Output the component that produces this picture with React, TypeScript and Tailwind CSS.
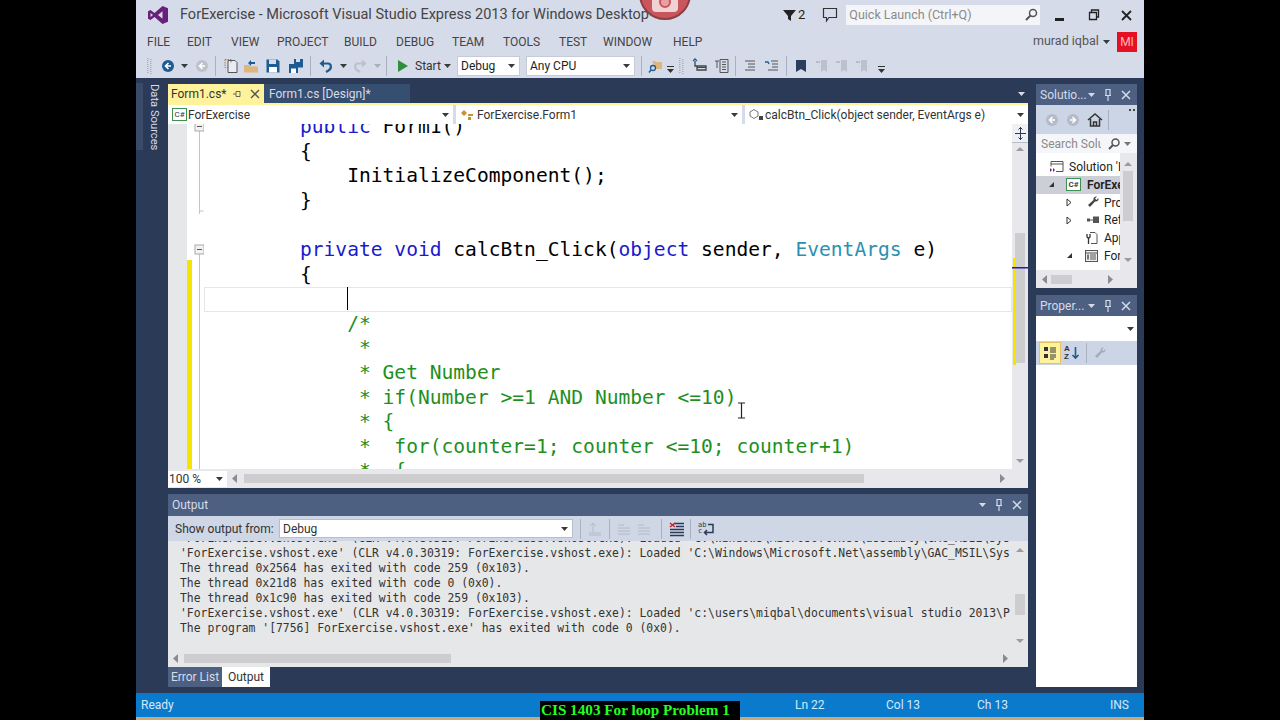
const Caret = ({ className = "", color = "#3a3a3a" }: { className?: string; color?: string }) => (
  <svg width="7" height="4" viewBox="0 0 7 4" className={"shrink-0 " + className}>
    <path d="M0 0h7L3.5 4z" fill={color} />
  </svg>
);

const Grip = ({ className = "" }: { className?: string }) => (
  <svg width="6" height="16" viewBox="0 0 6 16" className={"shrink-0 " + className}>
    {[0, 2, 4, 6, 8, 10, 12, 14].map((y) => (
      <g key={y} fill="#a9aebb">
        <rect x="0" y={y} width="1.5" height="1" />
        <rect x="3" y={y + 1} width="1.5" height="1" />
      </g>
    ))}
  </svg>
);

const Sep = ({ className = "", h = "h-[20px]" }: { className?: string; h?: string }) => (
  <div className={"w-px shrink-0 bg-[#a9b0c0] " + h + " " + className} />
);

const Overflow = ({ className = "" }: { className?: string }) => (
  <svg width="7" height="8" viewBox="0 0 7 8" className={"shrink-0 " + className}>
    <path d="M0 0h7v1H0zM0 3h7L3.5 7z" fill="#333" />
  </svg>
);

const Ico = ({ children, className = "", w = 16, h = 16 }: { children: React.ReactNode; className?: string; w?: number; h?: number }) => (
  <svg width={w} height={h} viewBox={`0 0 ${w} ${h}`} className={"shrink-0 " + className}>
    {children}
  </svg>
);

const NavCircle = ({ dir, color, className = "" }: { dir: "left" | "right"; color: string; className?: string }) => (
  <Ico w={14} h={14} className={className}>
    <circle cx="7" cy="7" r="6" fill={color} />
    <path d={dir === "left" ? "M7.5 4 4.5 7l3 3M5 7h5" : "M6.5 4l3 3-3 3M9 7H4"} stroke="#fff" strokeWidth="1.6" fill="none" />
  </Ico>
);

const PanelHeader = ({ title, wide }: { title: string; wide?: boolean }) => (
  <div className={"flex shrink-0 items-center bg-[#4d6082] text-[#d6dbe9] " + (wide ? "h-[22px] pl-[4px] pr-[5px] text-[12px]" : "h-[21px] pl-[4px] pr-[5px] text-[12px]")}>
    <span className="min-w-0 flex-1 truncate">{title}</span>
    <Caret color="#d6dbe9" />
    <Ico w={12} h={14} className="ml-[7px]">
      <path d="M4 1.5h4v6H4zM3 7.5h6M6 8v5" stroke="#d6dbe9" strokeWidth="1.2" fill="none" />
    </Ico>
    <Ico w={12} h={12} className="ml-[6px]">
      <path d="M2 2l8 8M10 2l-8 8" stroke="#d6dbe9" strokeWidth="1.5" />
    </Ico>
  </div>
);

const menus = [
  { label: "FILE", cls: "w-[40px]" },
  { label: "EDIT", cls: "w-[44px]" },
  { label: "VIEW", cls: "w-[46px]" },
  { label: "PROJECT", cls: "w-[67px]" },
  { label: "BUILD", cls: "w-[52px]" },
  { label: "DEBUG", cls: "w-[56px]" },
  { label: "TEAM", cls: "w-[51px]" },
  { label: "TOOLS", cls: "w-[56px]" },
  { label: "TEST", cls: "w-[44px]" },
  { label: "WINDOW", cls: "w-[70px]" },
  { label: "HELP", cls: "w-[40px]" },
];

const codeLines: { t: string; c: string }[][] = [
  [{ t: "        public", c: "text-[#1a1acd]" }, { t: " Form1()", c: "text-black" }],
  [{ t: "        {", c: "text-black" }],
  [{ t: "            InitializeComponent();", c: "text-black" }],
  [{ t: "        }", c: "text-black" }],
  [],
  [
    { t: "        private void", c: "text-[#1a1acd]" },
    { t: " calcBtn_Click(", c: "text-black" },
    { t: "object", c: "text-[#1a1acd]" },
    { t: " sender, ", c: "text-black" },
    { t: "EventArgs", c: "text-[#2b91af]" },
    { t: " e)", c: "text-black" },
  ],
  [{ t: "        {", c: "text-black" }],
  [],
  [{ t: "            /*", c: "text-[#1f8f1f]" }],
  [{ t: "             *", c: "text-[#1f8f1f]" }],
  [{ t: "             * Get Number", c: "text-[#1f8f1f]" }],
  [{ t: "             * if(Number >=1 AND Number <=10)", c: "text-[#1f8f1f]" }],
  [{ t: "             * {", c: "text-[#1f8f1f]" }],
  [{ t: "             *  for(counter=1; counter <=10; counter+1)", c: "text-[#1f8f1f]" }],
  [{ t: "             *  {", c: "text-[#1f8f1f]" }],
];

const outputLines = [
  "'ForExercise.vshost.exe' (CLR v4.0.30319: ForExercise.vshost.exe): Loaded 'C:\\Windows\\Microsoft.Net\\assembly\\GAC_MSIL\\Sys",
  "'ForExercise.vshost.exe' (CLR v4.0.30319: ForExercise.vshost.exe): Loaded 'C:\\Windows\\Microsoft.Net\\assembly\\GAC_MSIL\\Sys",
  "The thread 0x2564 has exited with code 259 (0x103).",
  "The thread 0x21d8 has exited with code 0 (0x0).",
  "The thread 0x1c90 has exited with code 259 (0x103).",
  "'ForExercise.vshost.exe' (CLR v4.0.30319: ForExercise.vshost.exe): Loaded 'c:\\users\\miqbal\\documents\\visual studio 2013\\P",
  "The program '[7756] ForExercise.vshost.exe' has exited with code 0 (0x0).",
];

const Combo = ({ label, className = "", icon }: { label: string; className?: string; icon?: React.ReactNode }) => (
  <div className={"flex items-center bg-white " + className}>
    {icon}
    <span className="min-w-0 flex-1 truncate">{label}</span>
    <Caret className="mr-[4px]" />
  </div>
);

const CSharpBox = ({ className = "" }: { className?: string }) => (
  <div className={"flex h-[13px] w-[15px] shrink-0 items-center justify-center border border-[#3f8f55] bg-white text-[8px] leading-none text-[#333] " + className}>
    C#
  </div>
);

const ArrowOpen = ({ className = "" }: { className?: string }) => (
  <Ico w={7} h={7} className={className}>
    <path d="M6 1v5H1z" fill="#333" />
  </Ico>
);

const ArrowClosed = ({ className = "" }: { className?: string }) => (
  <Ico w={6} h={9} className={className}>
    <path d="M1 1v7l4-3.500z" fill="#fff" stroke="#333" />
  </Ico>
);

export default function App() {
  return (
    <div className="flex h-[720px] w-[1280px] justify-center overflow-hidden bg-black font-['Roboto',sans-serif] text-[12px] text-[#1e1e1e]">
      <div className="relative flex w-[1008px] flex-col bg-[#d6dbe9]">
        {/* recording badge poking in from the top */}
        <div className="absolute left-[503px] top-[-32px] flex h-[52px] w-[52px] items-end justify-center rounded-full border-2 border-[#8c3f44] bg-[#c9565c] pb-[6px]">
          <div className="flex h-[20px] w-[26px] items-center justify-center rounded-sm bg-[#f0d2d2]">
            <div className="h-[12px] w-[12px] rounded-full border-2 border-[#c9565c] bg-[#e8a0a4]" />
          </div>
        </div>

        {/* title bar */}
        <div className="flex h-[30px] shrink-0 items-center">
          <Ico w={22} h={20} className="ml-[11px]">
            <path d="M15.500 1 21 3.300v13.400L15.500 19 7.500 12l-4 3L1 13.800V6.200L3.500 5l4 3zM15.500 6.200 11 10l4.500 3.800zM3.500 8v4L6 10z" fill="#68217a" />
          </Ico>
          <span className="ml-[11px] w-[469px] shrink-0 whitespace-nowrap text-[14.500px] text-[#444]">ForExercise - Microsoft Visual Studio Express 2013 for Windows Desktop</span>
          <Ico w={13} h={11} className="ml-[134px]">
            <path d="M0 0h13L8 6v5L5 9V6z" fill="#222" />
          </Ico>
          <span className="ml-[2px] text-[13px]">2</span>
          <Ico w={16} h={16} className="ml-[17px]">
            <path d="M1.500 1.500h13v9H7L4.500 14v-3.500h-3z" fill="none" stroke="#333" strokeWidth="1.200" />
          </Ico>
          <div className="ml-[8px] flex h-[20px] w-[194px] shrink-0 items-center justify-between bg-[#f4f5f9] pl-[3px] pr-[2px] text-[12.500px] text-[#8a8a8a]">
            <span>Quick Launch (Ctrl+Q)</span>
            <Ico w={14} h={14}>
              <circle cx="9" cy="5" r="3.500" fill="none" stroke="#555" strokeWidth="1.500" />
              <path d="M6.500 7.500 2 12" stroke="#555" strokeWidth="2" />
            </Ico>
          </div>
          <div className="ml-[15px] h-[3px] w-[9px] translate-y-[4px] bg-[#222]" />
          <Ico w={12} h={12} className="ml-[24px]">
            <path d="M3.500 3V1h7v7H8.500M1.500 3.500h7v7h-7z" fill="none" stroke="#222" strokeWidth="1.300" />
          </Ico>
          <Ico w={11} h={11} className="ml-[21px]">
            <path d="M1 1l9 9M10 1l-9 9" stroke="#222" strokeWidth="1.800" />
          </Ico>
        </div>

        {/* menu bar */}
        <div className="flex h-[23px] shrink-0 items-center pl-[11px] text-[12px] text-[#444]">
          {menus.map((m) => (
            <span key={m.label} className={m.cls}>{m.label}</span>
          ))}
          <span className="ml-[320px] w-[62px] whitespace-nowrap text-[12.500px] text-[#555]">murad iqbal</span>
          <Caret className="ml-[8px]" />
          <div className="ml-[7px] flex h-[20px] w-[20px] shrink-0 items-center justify-center bg-[#e51122] text-[12px] text-[#f7b6bd]">MI</div>
        </div>

        {/* toolbar */}
        <div className="flex h-[25px] shrink-0 items-center">
          <Grip className="ml-[11px]" />
          <NavCircle dir="left" color="#1d5c92" className="ml-[8px]" />
          <Caret className="ml-[6px]" />
          <NavCircle dir="left" color="#bcc1cc" className="ml-[7px]" />
          <Sep className="ml-[6px]" />
          <Ico className="ml-[7px]">
            <path d="M5 2.500h7l2 2v10H5z" fill="#e8ebf2" stroke="#555" />
            <path d="M2 1.500h6v3M2 1.500v8h3" fill="none" stroke="#a08050" strokeDasharray="1.500 1" />
          </Ico>
          <Ico className="ml-[4px]">
            <path d="M1 7h5l1 1.500h8v6H1z" fill="#dcb67a" />
            <path d="M5 5 8 2v2h4v2H8v2z" fill="#1d5c92" />
          </Ico>
          <Ico className="ml-[6px]">
            <path d="M1.500 1.500h11l2 2v11h-13z" fill="#1d5c92" />
            <rect x="4" y="1.500" width="7" height="4.500" fill="#d6dbe9" />
            <rect x="4" y="9" width="8" height="5.500" fill="#fff" />
          </Ico>
          <Ico className="ml-[7px]">
            <path d="M6 1h9v8.500H6z" fill="#1d5c92" />
            <rect x="8" y="1" width="4" height="3" fill="#d6dbe9" />
            <path d="M1 6h9v9H1z" fill="#1d5c92" />
            <rect x="3" y="10.500" width="5" height="4.500" fill="#fff" />
          </Ico>
          <Sep className="ml-[6px]" />
          <Ico className="ml-[7px]">
            <path d="M3.500 5.500h6.500c3.500 0 4 5 .5 7L8 14" fill="none" stroke="#1d5c92" strokeWidth="2.200" />
            <path d="M1.500 5.500 6 1.500v8z" fill="#1d5c92" />
          </Ico>
          <Caret className="ml-[6px]" />
          <Ico className="ml-[5px]">
            <path d="M12.500 5.500H6c-3.500 0-4 5-.5 7L8 14" fill="none" stroke="#bcc1cc" strokeWidth="2.200" />
            <path d="M14.500 5.500 10 1.500v8z" fill="#bcc1cc" />
          </Ico>
          <Caret className="ml-[6px]" color="#a9aebb" />
          <Sep className="ml-[5px]" />
          <Ico w={12} h={14} className="ml-[10px]">
            <path d="M1 1l10 6-10 6z" fill="#2f8f3a" />
          </Ico>
          <span className="ml-[6px] w-[25px] text-[#333]">Start</span>
          <Caret className="ml-[4px]" />
          <Combo label="Debug" className="ml-[6px] h-[20px] w-[63px] shrink-0 border border-[#c6cbd6] pl-[3px]" />
          <Combo label="Any CPU" className="ml-[6px] h-[20px] w-[109px] shrink-0 border border-[#c6cbd6] pl-[3px]" />
          <Sep className="ml-[6px]" />
          <Ico className="ml-[6px]">
            <path d="M4 3h3l1 1h6v7H8" fill="#dcb67a" />
            <circle cx="5" cy="10" r="2.500" fill="none" stroke="#1d5c92" strokeWidth="1.300" />
            <path d="M3 12 1 14.500" stroke="#1d5c92" strokeWidth="1.500" />
          </Ico>
          <Overflow className="ml-[3px] mt-[8px]" />
          <Grip className="ml-[5px]" />
          <Ico className="ml-[7px]">
            <path d="M3 3v5h2v4h9V8H5" fill="none" stroke="#444" strokeWidth="1.300" />
            <path d="M1 3l2-2 2 2" fill="none" stroke="#1d5c92" strokeWidth="1.300" />
            <path d="M5 9.500h9" stroke="#444" />
          </Ico>
          <Ico className="ml-[6px]">
            <path d="M6 1.500h8v13H6zM8 4h4M8 6.500h4M8 9h4M8 11.500h4M1 3h4M3 3v7" fill="none" stroke="#555" />
          </Ico>
          <Sep className="ml-[5px]" />
          <Ico className="ml-[6px]">
            <path d="M3 3h10M6 6h7M6 9h7M3 12h10" stroke="#555" />
          </Ico>
          <Ico className="ml-[6px]">
            <path d="M7 3h7M8 6h6M8 9h6M4 12h10" stroke="#555" />
            <path d="M1 4h3l1 2" fill="none" stroke="#1d5c92" strokeWidth="1.300" />
          </Ico>
          <Sep className="ml-[6px]" />
          <Ico className="ml-[6px]">
            <path d="M3 2h10v12l-5-3-5 3z" fill="#2b3f5c" />
          </Ico>
          <Ico className="ml-[5px]">
            <path d="M7 2h6v12l-3-2-3 2z" fill="#bcc1cc" />
            <path d="M2 4h4" stroke="#a9aebb" strokeWidth="1.300" />
          </Ico>
          <Ico className="ml-[4px]">
            <path d="M7 2h6v12l-3-2-3 2z" fill="#bcc1cc" />
            <path d="M2 4h4" stroke="#a9aebb" strokeWidth="1.300" />
          </Ico>
          <Ico className="ml-[4px]">
            <path d="M7 2h6v12l-3-2-3 2z" fill="#bcc1cc" />
            <path d="M2 4h4" stroke="#a9aebb" strokeWidth="1.300" />
          </Ico>
          <Overflow className="ml-[8px] mt-[8px]" />
        </div>

        {/* main dock area */}
        <div className="flex h-[615px] shrink-0 bg-[#2a3a57]">
          {/* data sources strip */}
          <div className="flex w-[32px] shrink-0">
            <div className="mt-[5px] h-[67px] w-[7px] bg-[#3a4a68]" />
            <span className="mt-[6px] ml-[2px] h-[66px] whitespace-nowrap text-[11.200px] leading-[18px] text-[#d6dbe9] [writing-mode:vertical-lr]">Data Sources</span>
          </div>

          {/* center column */}
          <div className="flex w-[860px] shrink-0 flex-col pt-[6px]">
            <div className="flex h-[19px] shrink-0 items-stretch">
              <div className="flex w-[96px] items-center bg-[#fff29d] pl-[3px] text-[#333]">
                <span className="flex-1">Form1.cs*</span>
                <Ico w={10} h={10}>
                  <path d="M1 5h3M4 2.500v5h4v-5z" fill="none" stroke="#666" />
                </Ico>
                <Ico w={10} h={10} className="ml-[8px] mr-[4px]">
                  <path d="M1 1l8 8M9 1l-8 8" stroke="#555" strokeWidth="1.400" />
                </Ico>
              </div>
              <div className="flex w-[146px] items-center bg-[#364e6f] pl-[5px] text-[#d6dbe9]">Form1.cs [Design]*</div>
              <div className="flex flex-1 items-center justify-end pr-[3px]">
                <Caret color="#d6dbe9" />
              </div>
            </div>
            <div className="h-[2px] shrink-0 bg-[#fff29d]" />
            <div className="flex h-[19px] shrink-0 gap-[3px] bg-[#d6dbe9] text-[12px] text-[#333]">
              <Combo label="ForExercise" className="w-[285px] pl-[4px]" icon={<CSharpBox className="mr-[1px]" />} />
              <Combo
                label="ForExercise.Form1"
                className="w-[286px] pl-[4px]"
                icon={
                  <Ico w={14} h={14} className="mr-[3px]">
                    <path d="M1 5l3-3 3 3-3 3zM8 6h5v2H8zM8 9h3v3H8z" fill="#c9912f" />
                  </Ico>
                }
              />
              <Combo
                label="calcBtn_Click(object sender, EventArgs e)"
                className="w-[283px] pl-[3px]"
                icon={
                  <Ico w={16} h={14} className="mr-[1px]">
                    <path d="M6 1.500 10 4v4L6 10.500 2 8V4z" fill="none" stroke="#777" />
                    <rect x="11" y="8" width="4" height="4" fill="#444" />
                  </Ico>
                }
              />
            </div>

            {/* editor */}
            <div className="flex h-[345px] shrink-0 bg-white">
              <div className="w-[19px] shrink-0 bg-[#e6e7e8]" />
              <svg width="17" height="345" viewBox="0 0 17 345" className="shrink-0">
                <rect x="0" y="136" width="5" height="209" fill="#f5e400" />
                <path d="M12.500 0v90M12.500 87h4M12.500 125v220" stroke="#c4c4c4" />
                <rect x="8" y="-2" width="9" height="9" fill="#f2f2f2" stroke="#aaa" />
                <rect x="8" y="121" width="9" height="9" fill="#f2f2f2" stroke="#aaa" />
                <path d="M10 2.500h5M10 125.500h5" stroke="#555" />
              </svg>
              <div className="relative min-w-0 flex-1 overflow-hidden">
                <div className="mt-[-9px] font-['DejaVu_Sans_Mono',monospace] text-[19.600px] leading-[24.600px]">
                  {codeLines.map((line, i) => (
                    <div key={i} className={"h-[24.600px] whitespace-pre pl-[1.600px] " + (i === 7 ? "border border-[#e6e6e6]" : "")}>
                      {line.map((s, j) => (
                        <span key={j} className={s.c}>{s.t}</span>
                      ))}
                    </div>
                  ))}
                </div>
                {/* text caret */}
                <div className="absolute left-[143px] top-[163px] h-[23px] w-px bg-black" />
                {/* mouse cursor */}
                <svg width="9" height="17" viewBox="0 0 9 17" className="absolute left-[533px] top-[278px]">
                  <path d="M1 1h7M1 16h7M4.500 1v15" stroke="#222" strokeWidth="1.200" />
                </svg>
              </div>
              <div className="flex w-[16px] shrink-0 flex-col items-center bg-[#e8e8ec]">
                <div className="flex h-[19px] w-full shrink-0 items-center justify-center border-b border-[#b6bcc8] bg-[#eef0f4]">
                  <Ico w={11} h={13}>
                    <path d="M0 6.500h11M5.500 0v13M3.500 2.500l2-2 2 2M3.500 10.500l2 2 2-2" stroke="#2a3a57" fill="none" />
                  </Ico>
                </div>
                <svg width="16" height="326" viewBox="0 0 16 326">
                  <path d="M4 8l4-4 4 4z" fill="#9a9aa2" />
                  <rect x="3" y="90" width="10" height="130" fill="#cdcdd0" />
                  <rect x="1" y="115" width="3" height="107" fill="#f5e400" />
                  <rect x="0" y="124" width="16" height="1.500" fill="#1a1acd" />
                  <path d="M4 316l4 4 4-4z" fill="#9a9aa2" />
                </svg>
              </div>
            </div>
            <div className="flex h-[19px] shrink-0 items-center bg-[#e8e8ec]">
              <Combo label="100 %" className="h-[16px] w-[59px] pl-[1px] text-[#333]" />
              <Ico w={6} h={9} className="ml-[5px]">
                <path d="M5 0v9L0 4.500z" fill="#8a8a92" />
              </Ico>
              <div className="ml-[6px] h-[9px] w-[620px] bg-[#cdcdd0]" />
              <Ico w={6} h={9} className="ml-[136px]">
                <path d="M0 0v9l5-4.500z" fill="#8a8a92" />
              </Ico>
            </div>
            <div className="h-[6px] shrink-0" />

            {/* output panel */}
            <PanelHeader title="Output" wide />
            <div className="flex h-[25px] shrink-0 items-center bg-[#cfd6e5] pl-[7px] text-[#333]">
              <span className="w-[104px] whitespace-nowrap">Show output from:</span>
              <Combo label="Debug" className="h-[19px] w-[294px] shrink-0 border border-[#b8bdca] pl-[3px]" />
              <Sep className="ml-[7px]" />
              <Ico className="ml-[6px]">
                <path d="M6 2v9M3 5l3-3 3 3M2 12h12M2 14h12" stroke="#b4bac6" fill="none" />
              </Ico>
              <Sep className="ml-[6px]" />
              <Ico className="ml-[6px]">
                <path d="M2 4h6M2 7h12M2 10h12M2 13h12" stroke="#b4bac6" />
              </Ico>
              <Ico className="ml-[4px]">
                <path d="M2 4h6M2 7h12M2 10h12M2 13h12" stroke="#b4bac6" />
              </Ico>
              <Sep className="ml-[9px]" />
              <Ico className="ml-[7px]">
                <path d="M5 2.500h10M7 5.500h8M1 8.500h14M1 11.500h14M1 14.500h14" stroke="#2a3a57" strokeWidth="1.300" />
                <path d="M1 2l5 4M6 2 1 6" stroke="#cc1f1f" strokeWidth="1.500" />
              </Ico>
              <Sep className="ml-[5px]" />
              <div className="relative ml-[7px] h-[16px] w-[16px]">
                <span className="absolute left-0 top-[1px] font-['DejaVu_Sans_Mono',monospace] text-[7px] leading-[6px] text-[#2a3a57]">ab<br />c</span>
                <Ico className="absolute left-0 top-0">
                  <path d="M10 3.500h5v8H7M9 9 6.500 11.500 9 14" fill="none" stroke="#2a3a57" strokeWidth="1.500" />
                </Ico>
              </div>
            </div>
            <div className="flex h-[109px] shrink-0 bg-[#e6e7e8]">
              <div className="min-w-0 flex-1 overflow-hidden">
                <div className="ml-[12px] mt-[-10px] font-['DejaVu_Sans_Mono',monospace] text-[11.400px] leading-[15px] text-[#333]">
                  {outputLines.map((l, i) => (
                    <div key={i} className="whitespace-pre">{l}</div>
                  ))}
                </div>
              </div>
              <svg width="16" height="109" viewBox="0 0 16 109" className="shrink-0">
                <path d="M4 11l4-4 4 4z" fill="#9a9aa2" />
                <rect x="3" y="53" width="10" height="21" fill="#cdcdd0" />
                <path d="M4 98l4 4 4-4z" fill="#9a9aa2" />
              </svg>
            </div>
            <div className="flex h-[17px] shrink-0 items-center bg-[#e6e7e8]">
              <Ico w={6} h={9} className="ml-[5px]">
                <path d="M5 0v9L0 4.500z" fill="#8a8a92" />
              </Ico>
              <div className="ml-[5px] h-[9px] w-[267px] bg-[#cdcdd0]" />
              <Ico w={6} h={9} className="ml-[552px]">
                <path d="M0 0v9l5-4.500z" fill="#8a8a92" />
              </Ico>
            </div>
            <div className="flex h-[20px] shrink-0">
              <div className="flex w-[54px] items-center justify-center bg-[#4d6082] text-[#d6dbe9]">Error List</div>
              <div className="flex w-[48px] items-center justify-center bg-white text-[#333]">Output</div>
            </div>
          </div>

          {/* right column */}
          <div className="ml-[8px] flex w-[101px] shrink-0 flex-col pt-[6px]">
            <PanelHeader title="Solutio..." />
            <div className="flex h-[29px] shrink-0 items-center bg-[#ccd5e5]">
              <NavCircle dir="left" color="#b4bac6" className="ml-[9px]" />
              <NavCircle dir="right" color="#b4bac6" className="ml-[7px]" />
              <Ico className="ml-[7px]">
                <path d="M1 8 8 2l7 6M3.500 7v7h9V7M6.500 14v-4h3v4" fill="none" stroke="#333" strokeWidth="1.500" />
              </Ico>
              <Sep className="ml-[5px]" />
              <Ico w={6} h={3} className="ml-[20px] -translate-y-[9px]">
                <path d="M0 0h2v2H0zM4 0h2v2H4z" fill="#444" />
              </Ico>
            </div>
            <div className="flex h-[19px] shrink-0 items-center bg-[#f5f6f9] pl-[5px] text-[#8a8a8a]">
              <span className="w-[60px] overflow-hidden whitespace-nowrap">Search Solution</span>
              <Ico w={14} h={14} className="ml-[6px]">
                <circle cx="8.500" cy="5.500" r="3.500" fill="none" stroke="#555" strokeWidth="1.500" />
                <path d="M6 8 2 12" stroke="#555" strokeWidth="2" />
              </Ico>
              <Caret className="ml-[3px]" color="#777" />
            </div>
            <div className="flex h-[117px] shrink-0 bg-white">
              <div className="w-[84px] shrink-0 overflow-hidden whitespace-nowrap pt-[5px] text-[#222]">
                <div className="flex h-[17.800px] items-center pl-[13px]">
                  <Ico w={15} h={14} className="mr-[5px]">
                    <path d="M2 1.500h12v10H7M2 1.500v5M2 4h12" stroke="#555" fill="none" />
                    <path d="M1 8l2 2-2 2zM4 8v4l2-2z" fill="#68217a" />
                  </Ico>
                  <span>Solution 'ForExercise'</span>
                </div>
                <div className="flex h-[17.800px] items-center bg-[#ccced8] pl-[12px] font-semibold">
                  <ArrowOpen className="mr-[11px]" />
                  <CSharpBox className="mr-[6px]" />
                  <span>ForExercise</span>
                </div>
                <div className="flex h-[17.800px] items-center pl-[30px]">
                  <ArrowClosed className="mr-[14px]" />
                  <Ico w={14} h={14} className="mr-[4px]">
                    <path d="M11 1.500 9 3.500l1.500 1.500 2-2c.5 2-1 4-3.500 3.500L4 12l-2-2 5.500-5C7 2.500 9 1 11 1.500z" fill="#444" />
                  </Ico>
                  <span>Properties</span>
                </div>
                <div className="flex h-[17.800px] items-center pl-[30px]">
                  <ArrowClosed className="mr-[14px]" />
                  <Ico w={14} h={14} className="mr-[4px]">
                    <rect x="1" y="5.500" width="3" height="3" fill="#555" />
                    <path d="M4 7h3" stroke="#555" />
                    <rect x="7" y="3.500" width="6" height="6.500" fill="#555" />
                  </Ico>
                  <span>References</span>
                </div>
                <div className="flex h-[17.800px] items-center pl-[48px]">
                  <Ico w={14} h={14} className="mr-[6px]">
                    <path d="M6 1.500h5l2 2v9H7" stroke="#555" fill="none" />
                    <path d="M3 3v3l1.500 1.500V13M6 3v3L4.500 7.500" stroke="#333" strokeWidth="1.300" fill="none" />
                  </Ico>
                  <span>App.config</span>
                </div>
                <div className="flex h-[17.800px] items-center pl-[30px]">
                  <ArrowOpen className="mr-[11px]" />
                  <Ico w={15} h={14} className="mr-[5px]">
                    <rect x="1.500" y="1.500" width="12" height="11" fill="#eee" stroke="#555" />
                    <path d="M1.500 4h12M6 6h6M6 8h6M6 10h6" stroke="#555" />
                    <rect x="3" y="5.500" width="2" height="5" fill="#777" />
                  </Ico>
                  <span>Form1.cs</span>
                </div>
              </div>
              <svg width="17" height="117" viewBox="0 0 17 117" className="shrink-0">
                <rect width="17" height="117" fill="#e8e8ec" />
                <path d="M4 13l4-4 4 4z" fill="#9a9aa2" />
                <rect x="3" y="18" width="10" height="50" fill="#cdcdd0" />
                <path d="M4 105l4 4 4-4z" fill="#9a9aa2" />
              </svg>
            </div>
            <div className="flex h-[18px] shrink-0 items-center bg-[#e8e8ec]">
              <Ico w={6} h={9} className="ml-[6px]">
                <path d="M5 0v9L0 4.500z" fill="#8a8a92" />
              </Ico>
              <div className="ml-[3px] h-[9px] w-[21px] bg-[#cdcdd0]" />
              <Ico w={6} h={9} className="ml-[36px]">
                <path d="M0 0v9l5-4.500z" fill="#8a8a92" />
              </Ico>
            </div>
            <div className="h-[7px] shrink-0" />
            <PanelHeader title="Proper..." />
            <div className="flex h-[25px] shrink-0 items-center justify-end bg-white pr-[3px]">
              <Caret />
            </div>
            <div className="flex h-[24px] shrink-0 items-center bg-[#ccd5e5]">
              <div className="ml-[3px] flex h-[22px] w-[22px] items-center justify-center border border-[#e5c365] bg-[#fff29d]">
                <Ico w={14} h={14}>
                  <path d="M1 1h4v4H1zM1 8h4v4H1z" fill="#333" />
                  <path d="M7 2h6M7 4h6M7 6h6M7 9h6M7 11h6M7 13h4" stroke="#333" />
                </Ico>
              </div>
              <div className="relative ml-[3px] h-[16px] w-[16px] font-['Liberation_Sans',sans-serif] text-[8px] font-bold leading-[8px] text-[#333]">
                <span className="absolute left-0 top-0">A<br />Z</span>
                <Ico className="absolute left-0 top-0">
                  <path d="M11.500 2v11M8.500 10l3 3 3-3" fill="none" stroke="#1d5c92" strokeWidth="1.600" />
                </Ico>
              </div>
              <Sep className="ml-[6px]" />
              <Ico w={14} h={14} className="ml-[6px]">
                <path d="M11 1.500 9 3.500l1.500 1.500 2-2c.5 2-1 4-3.500 3.500L4 12l-2-2 5.500-5C7 2.500 9 1 11 1.500z" fill="#a6acb8" />
              </Ico>
            </div>
            <div className="h-[322px] shrink-0 bg-white" />
          </div>
        </div>

        {/* status bar */}
        <div className="flex h-[24px] shrink-0 items-center bg-[#0a7acc] text-[12px] text-[#d4e9f8]">
          <span className="ml-[5px] w-[654px]">Ready</span>
          <span className="w-[91px]">Ln 22</span>
          <span className="w-[91px]">Col 13</span>
          <span className="w-[133px]">Ch 13</span>
          <span>INS</span>
        </div>
        <div className="h-[3px] shrink-0 bg-[#c8a878]" />

        {/* burned-in video caption */}
        <div className="absolute bottom-0 left-[404px] flex h-[19px] w-[200px] items-center bg-black pl-[1px] font-['Liberation_Serif',serif] text-[15.200px] font-bold text-[#25ff25]">
          CIS 1403 For loop Problem 1
        </div>
      </div>
    </div>
  );
}
